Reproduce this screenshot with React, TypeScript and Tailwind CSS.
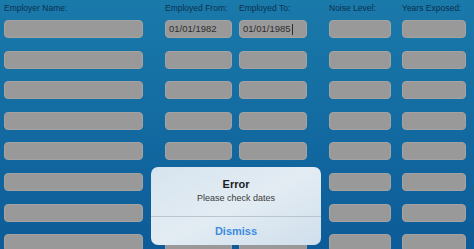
export default function App() {
  const cols = [
    { label: "Employer Name:", w: "w-[139px]", ml: "ml-[4px]" },
    { label: "Employed From:", w: "w-[67px]", ml: "ml-[22px]" },
    { label: "Employed To:", w: "w-[68px]", ml: "ml-[7px]" },
    { label: "Noise Level:", w: "w-[62px]", ml: "ml-[22px]" },
    { label: "Years Exposed:", w: "w-[64px]", ml: "ml-[11px]" },
  ];
  const rows = [0, 1, 2, 3, 4, 5, 6, 7];
  const value = (c: number, r: number) => {
    if (r !== 0) return "";
    if (c === 1) return "01/01/1982";
    if (c === 2) return "01/01/1985";
    return "";
  };

  return (
    <div
      className="relative w-[474px] h-[249px] overflow-hidden bg-gradient-to-b from-[#1a7aaa] to-[#0d5b98]"
      style={{ fontFamily: '"Liberation Sans", Arial, sans-serif' }}
    >
      <div className="flex">
        {cols.map((col, c) => (
          <div key={c} className={`${col.w} ${col.ml} flex flex-col`}>
            <div className="h-[20px] pt-[2px] text-[8.5px] leading-[12px] text-[#0a3150] whitespace-nowrap">
              {col.label}
            </div>
            <div className="flex flex-col gap-y-[12.6px]">
              {rows.map((r) => (
                <div
                  key={r}
                  className="h-[18px] rounded-[4px] bg-[#9a9999] border border-[#a3a3a3] flex items-center pl-[3px] text-[9.5px] text-[#2e2e2e]"
                >
                  {value(c, r)}
                  {c === 2 && r === 0 && (
                    <span className="inline-block w-[1px] h-[11px] bg-[#2e2e2e] ml-[1px]" />
                  )}
                </div>
              ))}
            </div>
          </div>
        ))}
      </div>

      <div className="absolute left-[151px] top-[167px] w-[170px] h-[78px] rounded-[7px] bg-gradient-to-br from-[#d6e4ef] via-[#e3ecf3] to-[#cfdfec] flex flex-col">
        <div className="h-[49px] flex flex-col items-center pt-[10px]">
          <div className="text-[11px] leading-[14px] font-semibold text-[#1d1d1d]">Error</div>
          <div className="text-[9px] leading-[11px] mt-[2px] text-[#3a3a3a]">Please check dates</div>
        </div>
        <div className="h-px bg-[#b9c5cf]" />
        <div className="flex-1 flex items-center justify-center text-[11px] font-semibold text-[#3d8ce0]">
          Dismiss
        </div>
      </div>
    </div>
  );
}
